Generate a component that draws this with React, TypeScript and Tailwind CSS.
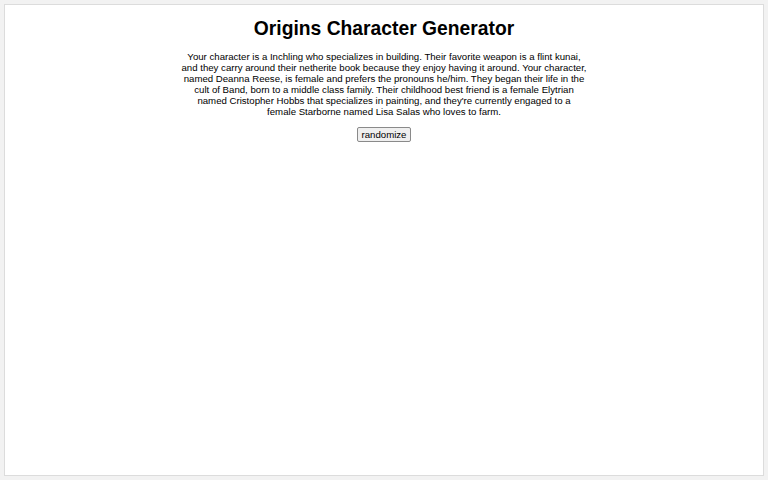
import React, { useState } from 'react';

// the generated bio, broken into the lines it is set in
const story = [
  'Your character is a Inchling who specializes in building. Their favorite weapon is a flint kunai,',
  'and they carry around their netherite book because they enjoy having it around. Your character,',
  'named Deanna Reese, is female and prefers the pronouns he/him. They began their life in the',
  'cult of Band, born to a middle class family. Their childhood best friend is a female Elytrian',
  "named Cristopher Hobbs that specializes in painting, and they're currently engaged to a",
  'female Starborne named Lisa Salas who loves to farm.',
];

export default function App() {
  const [lines, setLines] = useState(story);

  return (
    <div className="h-[480px] w-[768px] bg-[#f2f2f2] p-[4px] font-['Liberation_Sans',Arial,sans-serif] text-black">
      <div className="h-full border border-[#dcdcdc] bg-white flex flex-col items-center">
        <h1 className="mt-[12px] text-[19.3px] leading-[24px] font-bold">Origins Character Generator</h1>
        <p className="mt-[10px] text-center text-[9.65px] leading-[11px] whitespace-nowrap">
          {lines.map((line, i) => (
            <React.Fragment key={i}>
              {line}
              {i < lines.length - 1 && <br />}
            </React.Fragment>
          ))}
        </p>
        <button
          onClick={() => setLines(story)}
          className="mt-[10px] h-[15px] px-[4px] text-[9.65px] leading-[12px] border border-[#8a8a8a] rounded-[2px] bg-[#efefef]"
        >
          randomize
        </button>
      </div>
    </div>
  );
}
